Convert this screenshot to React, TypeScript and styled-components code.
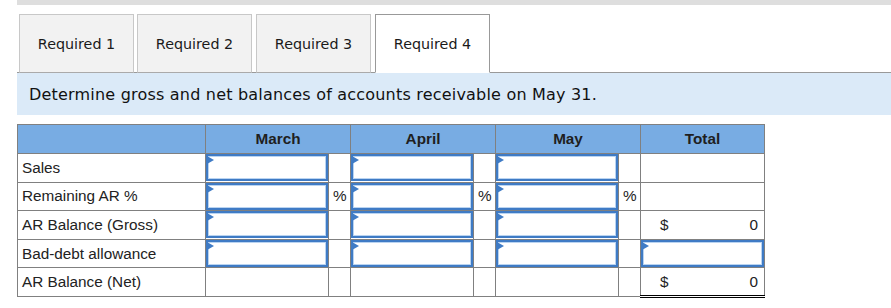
import React from "react";
import styled, { createGlobalStyle, css } from "styled-components";

const Global = createGlobalStyle`
  html, body { margin: 0; padding: 0; background: #fff; }
  body { font-family: "DejaVu Sans", Verdana, sans-serif; color: #222; }
`;

const Page = styled.div`
  padding-left: 17px;
`;

const TopBar = styled.div`
  height: 5px;
  background: #dedede;
`;

const TabStrip = styled.div`
  display: flex;
  margin-top: 9px;
  padding-left: 2px;
  border-bottom: 1px solid #999;
`;

const Tab = styled.div<{ $active?: boolean }>`
  box-sizing: border-box;
  width: 115px;
  height: 59px;
  margin-right: 4px;
  margin-bottom: -1px;
  display: flex;
  align-items: center;
  justify-content: center;
  font-size: 14.3px;
  color: #1a1a1a;
  background: #f2f2f2;
  border: 1px solid #c8c8c8;
  border-bottom-color: #aaa;
  &:first-child { margin-right: 3px; }
  ${(p) =>
    p.$active &&
    css`
      background: #fff;
      border-color: #999;
      border-bottom-color: #fff;
    `}
`;

const Instruction = styled.div`
  height: 42px;
  display: flex;
  align-items: center;
  padding-left: 12px;
  background: #dbeaf8;
  font-size: 16px;
  letter-spacing: 0.2px;
  color: #111;
`;

const Grid = styled.table`
  margin-top: 9px;
  border-collapse: collapse;
  table-layout: fixed;
  width: 747px;
  font-family: "Liberation Sans", Arial, sans-serif;
  font-size: 15.3px;
  color: #222;
`;

const HeadCell = styled.th`
  height: 28px;
  padding: 0;
  background: #78ace3;
  border: 1px solid #808080;
  font-weight: bold;
  text-align: center;
  color: #1f1f1f;
`;

const Row = styled.tr`
  height: 28.6px;
`;

const LabelCell = styled.td`
  padding: 0 0 0 4px;
  border: 1px solid #808080;
  white-space: nowrap;
`;

const InputCell = styled.td`
  padding: 0;
  border: 1px solid #808080;
  vertical-align: top;
`;

const UnitCell = styled.td`
  padding: 0 0 0 4px;
  border: 1px solid #808080;
`;

const TotalCell = styled.td<{ $net?: boolean }>`
  padding: 0 6px 0 19px;
  border: 1px solid #808080;
  ${(p) =>
    p.$net &&
    css`
      border-top: 1px solid #000;
      border-bottom: 3px double #000;
    `}
`;

const Amount = styled.div`
  display: flex;
  justify-content: space-between;
`;

const Field = styled.div`
  position: relative;
  box-sizing: border-box;
  height: 27px;
  border: 2px solid #3f7bc5;
  box-shadow: inset 0 0 0 1px #bad4f1;
  background: #fff;
  &::before {
    content: "";
    position: absolute;
    left: -1px;
    top: 0px;
    border-style: solid;
    border-width: 4px 0 4px 7px;
    border-color: transparent transparent transparent #3f7bc5;
  }
`;

const rows = [
  { label: "Sales", pct: false, total: "none" },
  { label: "Remaining AR %", pct: true, total: "none" },
  { label: "AR Balance (Gross)", pct: false, total: "amount" },
  { label: "Bad-debt allowance", pct: false, total: "input" },
  { label: "AR Balance (Net)", pct: false, total: "net" },
];

export default function App() {
  return (
    <Page>
      <Global />
      <TopBar />
      <TabStrip>
        <Tab>Required 1</Tab>
        <Tab>Required 2</Tab>
        <Tab>Required 3</Tab>
        <Tab $active>Required 4</Tab>
      </TabStrip>
      <Instruction>
        Determine gross and net balances of accounts receivable on May 31.
      </Instruction>
      <Grid>
        <colgroup>
          <col style={{ width: 188 }} />
          <col style={{ width: 123 }} />
          <col style={{ width: 22 }} />
          <col style={{ width: 123 }} />
          <col style={{ width: 22 }} />
          <col style={{ width: 123 }} />
          <col style={{ width: 22 }} />
          <col style={{ width: 124 }} />
        </colgroup>
        <thead>
          <tr>
            <HeadCell />
            <HeadCell colSpan={2}>March</HeadCell>
            <HeadCell colSpan={2}>April</HeadCell>
            <HeadCell colSpan={2}>May</HeadCell>
            <HeadCell>Total</HeadCell>
          </tr>
        </thead>
        <tbody>
          {rows.map((r, i) => {
            const editable = i < 4;
            return (
              <Row key={r.label}>
                <LabelCell>{r.label}</LabelCell>
                {[0, 1, 2].map((m) => (
                  <React.Fragment key={m}>
                    <InputCell>{editable && <Field />}</InputCell>
                    <UnitCell>{r.pct ? "%" : ""}</UnitCell>
                  </React.Fragment>
                ))}
                {r.total === "input" ? (
                  <InputCell>
                    <Field />
                  </InputCell>
                ) : (
                  <TotalCell $net={r.total === "net"}>
                    {r.total === "amount" || r.total === "net" ? (
                      <Amount>
                        <span>$</span>
                        <span>0</span>
                      </Amount>
                    ) : null}
                  </TotalCell>
                )}
              </Row>
            );
          })}
        </tbody>
      </Grid>
    </Page>
  );
}
